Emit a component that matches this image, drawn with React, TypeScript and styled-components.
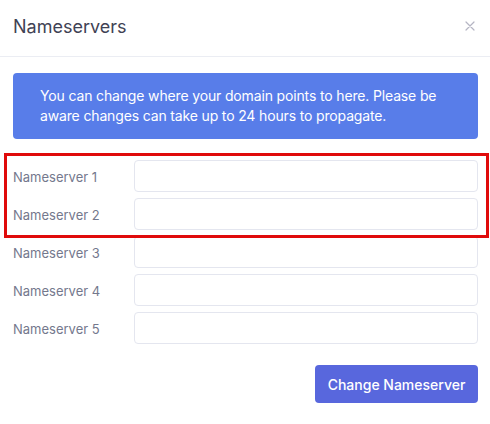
import styled, { createGlobalStyle } from 'styled-components'

const GlobalStyle = createGlobalStyle`
	* {
		box-sizing: border-box;
	}
	body {
		margin: 0;
		background: #ffffff;
		font-family: Inter, 'Noto Sans', sans-serif;
	}
`

const fields = ['Nameserver 1', 'Nameserver 2', 'Nameserver 3', 'Nameserver 4', 'Nameserver 5']

const App = () => {
	return (
		<>
			<GlobalStyle />
			<Modal>
				<Header>
					<Title>Nameservers</Title>
					<CloseBtn aria-label="Close">
						<svg width="10" height="10" viewBox="0 0 10 10">
							<path d="M1 1 L9 9 M9 1 L1 9" stroke="#b5b5c3" strokeWidth="1.2" strokeLinecap="round" />
						</svg>
					</CloseBtn>
				</Header>
				<Body>
					<Alert>
						You can change where your domain points to here. Please be aware changes can take up to 24 hours to
						propagate.
					</Alert>
					<Fields>
						<Highlight>
							{fields.slice(0, 2).map((name) => (
								<FieldRow key={name}>
									<Label>{name}</Label>
									<Input type="text" />
								</FieldRow>
							))}
						</Highlight>
						{fields.slice(2).map((name) => (
							<FieldRow key={name}>
								<Label>{name}</Label>
								<Input type="text" />
							</FieldRow>
						))}
					</Fields>
					<Footer>
						<SubmitBtn>Change Nameserver</SubmitBtn>
					</Footer>
				</Body>
			</Modal>
		</>
	)
}

export default App

const Modal = styled.div`
	width: 490px;
	height: 424px;
	background: #ffffff;
`
const Header = styled.div`
	display: flex;
	align-items: center;
	justify-content: space-between;
	height: 57px;
	padding: 0 15px 4px 13px;
	border-bottom: 1px solid #ebedf3;
`
const Title = styled.h3`
	margin: 0;
	font-size: 18px;
	font-weight: 400;
	color: #3f4254;
`
const CloseBtn = styled.button`
	display: flex;
	align-items: center;
	justify-content: center;
	border: 0;
	background: none;
	padding: 0;
	cursor: pointer;
`
const Body = styled.div`
	padding: 16px 12px 0 13px;
`
const Alert = styled.div`
	background-color: #587de9;
	border-radius: 4px;
	padding: 13px 20px 13px 27px;
	color: #ffffff;
	font-size: 14px;
	letter-spacing: -0.15px;
	line-height: 20px;
`
const Fields = styled.div`
	display: flex;
	flex-direction: column;
	gap: 6px;
	margin-top: 21px;
`
const Highlight = styled.div`
	position: relative;
	display: flex;
	flex-direction: column;
	gap: 6px;

	&::after {
		content: '';
		position: absolute;
		top: -7px;
		left: -9px;
		right: -11px;
		bottom: -8px;
		border: 3px solid #e00b0b;
		pointer-events: none;
	}
`
const FieldRow = styled.div`
	display: grid;
	grid-template-columns: 121px 1fr;
	align-items: center;
`
const Label = styled.label`
	padding-top: 2px;
	font-size: 13px;
	color: #74788d;
`
const Input = styled.input`
	height: 32px;
	border: 1px solid #e4e6ef;
	border-radius: 4px;
	padding: 0 12px;
	font-size: 13px;
	outline: none;
`
const Footer = styled.div`
	display: flex;
	justify-content: flex-end;
	margin-top: 21px;
`
const SubmitBtn = styled.button`
	height: 38px;
	width: 163px;
	border: 0;
	border-radius: 4px;
	background-color: #5867dd;
	color: #ffffff;
	font-family: inherit;
	font-size: 14px;
	font-weight: 500;
	cursor: pointer;
`
